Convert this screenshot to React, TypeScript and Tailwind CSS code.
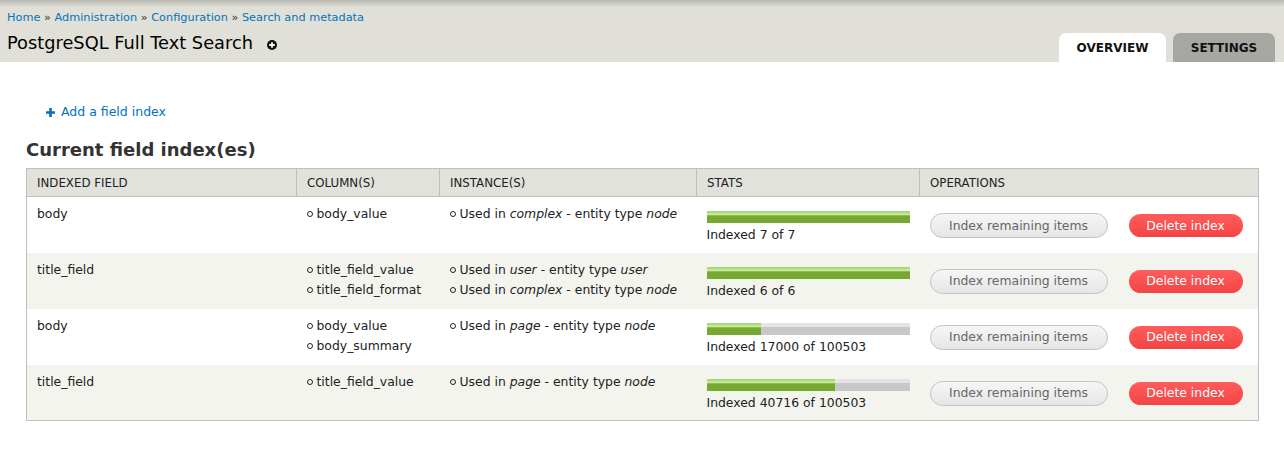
import React from "react";

const font = { fontFamily: '"DejaVu Sans", Verdana, sans-serif' };

function Bullet() {
  return <span className="inline-block w-[6px] h-[6px] rounded-full border border-[#222] mr-[4px] mb-[1px] align-middle" />;
}

function Progress({ w }: { w: number }) {
  return (
    <div className="relative w-[203px] h-[12px] bg-[#c8c8c8] overflow-hidden">
      <div className="absolute left-0 right-0 top-0 h-[4px] bg-[#e4e4e4]" />
      <div className="absolute left-0 top-0 bottom-0 bg-[#77a832]" style={{ width: `${w}px` }}>
        <div className="absolute left-0 right-0 top-0 h-[2px] bg-[#a8d878]" />
        <div className="absolute left-0 right-0 top-[2px] h-[2px] bg-[#c6e69c]" />
        <div className="absolute left-0 right-0 top-[4px] h-[1px] bg-[#8dbe4a]" />
      </div>
    </div>
  );
}

type Row = {
  field: string;
  cols: string[];
  inst: [string, string][];
  done: number;
  total: number;
  w: number;
};

const rows: Row[] = [
  { field: "body", cols: ["body_value"], inst: [["complex", "node"]], done: 7, total: 7, w: 203 },
  {
    field: "title_field",
    cols: ["title_field_value", "title_field_format"],
    inst: [["user", "user"], ["complex", "node"]],
    done: 6,
    total: 6,
    w: 203,
  },
  { field: "body", cols: ["body_value", "body_summary"], inst: [["page", "node"]], done: 17000, total: 100503, w: 54 },
  { field: "title_field", cols: ["title_field_value"], inst: [["page", "node"]], done: 40716, total: 100503, w: 128 },
];

export default function App() {
  return (
    <div className="w-[1284px] h-[460px] bg-white text-[#222] overflow-hidden" style={font}>
      <div className="relative h-[62px] bg-[#e0e0d8]">
        <div className="absolute left-0 right-0 top-0 h-[7px] bg-gradient-to-b from-[#b9b9b3] to-[#e0e0d8]" />
        <div className="relative pl-[7px] pt-[10px] text-[11.3px] leading-[16px] text-[#0074bd]">
          <span>Home</span>
          <span className="text-[#333]"> » </span>
          <span>Administration</span>
          <span className="text-[#333]"> » </span>
          <span>Configuration</span>
          <span className="text-[#333]"> » </span>
          <span>Search and metadata</span>
        </div>
        <div className="relative pl-[7px] pt-[6px] flex items-center text-[17.8px] leading-[22px] text-black">
          <span>PostgreSQL Full Text Search</span>
          <svg width="10" height="10" viewBox="0 0 10 10" className="ml-[14px] mt-[3px]">
            <circle cx="5" cy="5" r="5" fill="#111" />
            <path d="M5 2.2v5.6M2.2 5h5.6" stroke="#fff" strokeWidth="1.8" />
          </svg>
        </div>
        <div className="absolute right-[9px] bottom-0 flex gap-[7px] text-[12px] font-bold">
          <div className="w-[107px] h-[29px] bg-white rounded-t-[7px] flex items-center justify-center text-[#111]">OVERVIEW</div>
          <div className="w-[102px] h-[29px] bg-[#a6a7a2] rounded-t-[7px] flex items-center justify-center text-[#111]">SETTINGS</div>
        </div>
      </div>

      <div className="pl-[46px] pt-[41px] flex items-center text-[12.5px] leading-[18px] text-[#0074bd]">
        <svg width="9" height="9" viewBox="0 0 9 9" className="mr-[6px]">
          <path d="M4.5 0v9M0 4.5h9" stroke="#0074bd" strokeWidth="2.6" />
        </svg>
        <span>Add a field index</span>
      </div>

      <h2 className="pl-[26px] pt-[18px] text-[18px] leading-[22px] font-bold text-[#333]">Current field index(es)</h2>

      <table className="ml-[26px] mt-[7px] border-collapse table-fixed w-[1232px] text-[12.4px] leading-[20px] text-[#222]">
        <colgroup>
          <col className="w-[270px]" />
          <col className="w-[143px]" />
          <col className="w-[257px]" />
          <col className="w-[223px]" />
          <col className="w-[339px]" />
        </colgroup>
        <thead>
          <tr className="h-[28px] bg-[#e1e2dc] text-[11.8px] text-[#222]">
            {["INDEXED FIELD", "COLUMN(S)", "INSTANCE(S)", "STATS", "OPERATIONS"].map((h) => (
              <th key={h} className="border border-[#bebfb9] text-left font-normal px-[10px] py-0">
                {h}
              </th>
            ))}
          </tr>
        </thead>
        <tbody className="border border-[#bebfb9]">
          {rows.map((r, i) => (
            <tr key={i} className={`h-[56px] align-top ${i % 2 === 1 ? "bg-[#f3f4ee]" : "bg-white"}`}>
              <td className="px-[10px] pt-[7px]">{r.field}</td>
              <td className="px-[10px] pt-[7px]">
                {r.cols.map((c) => (
                  <div key={c} className="whitespace-nowrap">
                    <Bullet />
                    {c}
                  </div>
                ))}
              </td>
              <td className="px-[10px] pt-[7px]">
                {r.inst.map(([b, t], k) => (
                  <div key={k} className="whitespace-nowrap">
                    <Bullet />
                    Used in <em>{b}</em> - entity type <em>{t}</em>
                  </div>
                ))}
              </td>
              <td className="px-[10px] pt-[14px]">
                <Progress w={r.w} />
                <div className="pt-[2px]">
                  Indexed {r.done} of {r.total}
                </div>
              </td>
              <td className="pl-[10px] pt-[16px]">
                <div className="flex items-center gap-[21px]">
                  <div className="w-[178px] h-[25px] rounded-full border border-[#c4c4c4] bg-gradient-to-b from-[#f6f6f6] to-[#e6e6e6] text-[#666] flex items-center justify-center">
                    Index remaining items
                  </div>
                  <div className="w-[114px] h-[23px] rounded-full bg-gradient-to-b from-[#ff5c5c] to-[#f44444] text-white flex items-center justify-center">
                    Delete index
                  </div>
                </div>
              </td>
            </tr>
          ))}
        </tbody>
      </table>
    </div>
  );
}
